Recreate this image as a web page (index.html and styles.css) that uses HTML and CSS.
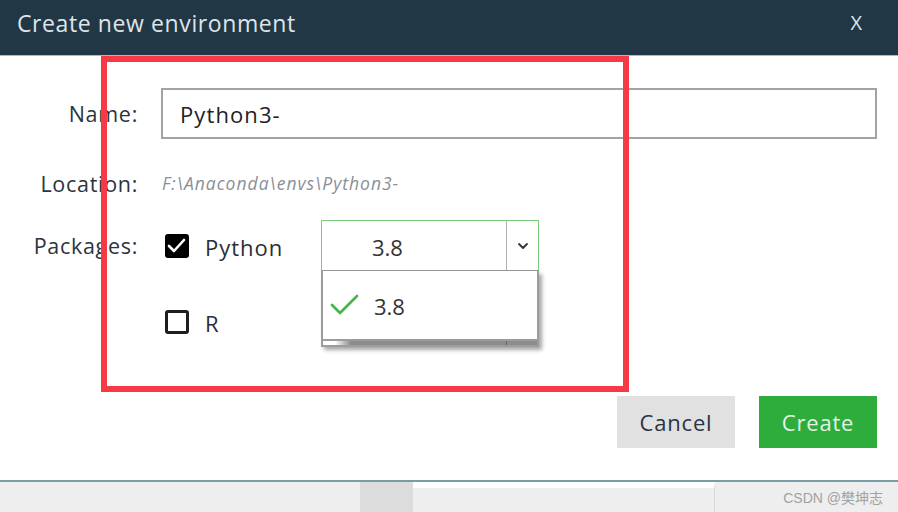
FILE: index.html
```html
<!DOCTYPE html>
<html>
<head>
<meta charset="utf-8">
<link rel="stylesheet" href="styles.css">
</head>
<body>
<div class="page">
  <header class="titlebar">
    <span class="title">Create new environment</span>
    <span class="close">X</span>
  </header>
  <main class="main">
    <div class="form">
      <div class="label row-name">Name:</div>
      <div class="row-name"><div class="input">Python3-</div></div>

      <div class="label row-loc">Location:</div>
      <div class="row-loc path">F:\Anaconda\envs\Python3-</div>

      <div class="label row-pkg">Packages:</div>
      <div class="row-pkg pkg">
        <label class="check-item">
          <span class="box checked">
            <svg viewBox="0 0 24 24" width="24" height="24"><path d="M4 12 L9 17 L19 6" fill="none" stroke="#fff" stroke-width="2.6" stroke-linecap="round" stroke-linejoin="round"/></svg>
          </span>
          <span class="check-text">Python</span>
        </label>
        <div class="select-wrap">
          <div class="select">
            <span class="select-value">3.8</span>
            <span class="select-btn">
              <svg viewBox="0 0 12 8" width="12" height="8"><path d="M2 2 L6 6 L10 2" fill="none" stroke="#333" stroke-width="1.8" stroke-linecap="round" stroke-linejoin="round"/></svg>
            </span>
          </div>
          <div class="popup">
            <div class="option">
              <svg class="tick" viewBox="0 0 30 22" width="30" height="22"><path d="M2 11 L10 19 L27 2" fill="none" stroke="#43b54a" stroke-width="2.6" stroke-linecap="round" stroke-linejoin="round"/></svg>
              <span>3.8</span>
            </div>
            <div class="popup-foot"><span class="foot-a"></span><span class="foot-b"></span></div>
          </div>
        </div>
      </div>

      <div class="label row-r"></div>
      <div class="row-r pkg">
        <label class="check-item">
          <span class="box"></span>
          <span class="check-text">R</span>
        </label>
      </div>
    </div>
    <div class="actions">
      <button class="btn cancel">Cancel</button>
      <button class="btn create">Create</button>
    </div>
    <div class="annotation"></div>
  </main>
  <footer class="footer">
    <span class="seg seg1"></span>
    <span class="seg seg2"></span>
    <span class="seg seg3"></span>
    <span class="seg seg4"><span class="watermark">CSDN @樊坤志</span></span>
  </footer>
</div>
</body>
</html>
```

FILE: styles.css
```css
* { box-sizing: border-box; }
html, body { margin: 0; padding: 0; background: #fff; }
body { width: 898px; height: 512px; overflow: hidden; font-family: "Open Sans", "Noto Sans", sans-serif; color: #2a2f36; }
.page { width: 898px; height: 512px; display: flex; flex-direction: column; }

.titlebar {
  height: 56px; flex: none;
  background: #223746;
  border-bottom: 1px solid #a9bcc6;
  display: flex; align-items: center; justify-content: space-between;
  padding: 0 36px 10px 17px;
  color: #dde5ea;
}
.title { font-size: 23px; letter-spacing: 0.6px; }
.close { font-size: 20px; }

.main { position: relative; flex: none; height: 424px; display: flex; flex-direction: column; padding-top: 32px; }

.form {
  display: grid;
  grid-template-columns: 137px 1fr;
  column-gap: 24px;
  padding-right: 21px;
}
.label { font-size: 21.5px; letter-spacing: 0.7px; color: #2d3340; display: flex; align-items: center; justify-content: flex-end; margin-right: -1px; }

.row-name { height: 51px; }
.input {
  height: 51px; border: 2px solid #a3a3a3;
  display: flex; align-items: center; padding-left: 17px;
  font-size: 22px; letter-spacing: 1.1px; color: #222;
}

.row-loc { height: 30px; margin-top: 29px; }
.path { display: flex; align-items: center; font-style: italic; font-size: 17.5px; color: #8a8f96; padding-left: 1px; letter-spacing: 1px; }

.row-pkg { height: 51px; margin-top: 22px; }
.pkg { display: flex; align-items: center; }

.check-item { display: flex; align-items: center; width: 160px; padding-left: 4px; }
.box {
  width: 24px; height: 24px; border-radius: 3px; border: 3px solid #1e1e1e; background: #fff;
  display: flex; align-items: center; justify-content: center; flex: none;
}
.box.checked { background: #000; border-color: #000; }
.box.checked svg { flex: none; }
.check-text { margin-left: 16px; font-size: 22px; letter-spacing: 1px; color: #2a2f36; padding-top: 2px; }

.select-wrap { position: relative; width: 218px; height: 51px; }
.select {
  height: 51px; border: 1px solid #7ccb7c; border-bottom-color: #9a9a9a;
  display: flex; align-items: stretch;
}
.select-value { flex: 1; display: flex; align-items: center; padding-left: 50px; font-size: 22px; color: #333; padding-top: 2px; }
.select-btn { width: 32px; border-left: 1px solid #b0b0b0; display: flex; align-items: center; justify-content: center; }

.popup {
  position: absolute; left: 0; top: 51px; width: 218px; height: 76px;
  background: #fff;
  border: 2px solid #9c9c9c; border-top: none;
  box-shadow: 3px 3px 4px rgba(0,0,0,0.35);
  display: flex; flex-direction: column;
}
.option { height: 68px; display: flex; align-items: center; padding-left: 7px; font-size: 22px; color: #333; }
.option span { margin-left: 14px; padding-top: 2px; }
.popup-foot { height: 6px; display: flex; border-top: 2px solid #9c9c9c; }
.foot-a { width: 184px; background: linear-gradient(to right, #fff 0, #fff 12px, #8c8c8c 28px, #8c8c8c 100%); border-right: 1px solid #666; }
.foot-b { flex: 1; background: #8c8c8c; }

.row-r { height: 24px; margin-top: 39px; }

.actions { display: flex; justify-content: flex-end; gap: 24px; padding-right: 21px; margin-top: 62px; }
.btn {
  width: 118px; height: 52px; border: none; font-family: inherit; font-size: 22px; letter-spacing: 0.8px; padding: 0;
}
.cancel { background: #e1e1e1; color: #2a3442; }
.create { background: #2ead3d; color: #e2f4e2; }

.annotation {
  position: absolute; left: 101px; top: 0; width: 528px; height: 336px;
  border: 6px solid #f43a44; pointer-events: none;
}

.footer { flex: none; height: 32px; border-top: 2px solid #7b9ba6; display: flex; }
.seg { height: 30px; background: #eeeeee; }
.seg1 { width: 360px; }
.seg2 { width: 53px; background: #dcdcdc; }
.seg3 { width: 302px; border-top: 6px solid #fff; border-right: 1px solid #d8d8d8; }
.seg4 { flex: 1; display: flex; align-items: center; justify-content: flex-end; padding-right: 15px; }
.watermark { font-family: "Liberation Sans", "Noto Sans CJK SC", sans-serif; font-size: 14px; color: #a2a2a2; }
```
